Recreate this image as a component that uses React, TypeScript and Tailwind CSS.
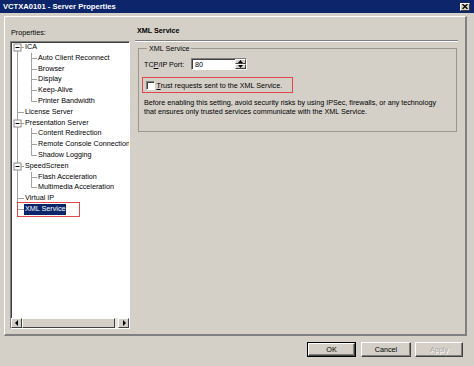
import React from "react";

type Row = {
  t: string;
  l: 0 | 1;
  box?: boolean;
  first?: boolean;
  last?: boolean;
  lastTop?: boolean;
  selected?: boolean;
};

const rows: Row[] = [
  { t: "ICA", l: 0, box: true, first: true },
  { t: "Auto Client Reconnect", l: 1 },
  { t: "Browser", l: 1 },
  { t: "Display", l: 1 },
  { t: "Keep-Alive", l: 1 },
  { t: "Printer Bandwidth", l: 1, last: true },
  { t: "License Server", l: 0 },
  { t: "Presentation Server", l: 0, box: true },
  { t: "Content Redirection", l: 1 },
  { t: "Remote Console Connection", l: 1 },
  { t: "Shadow Logging", l: 1, last: true },
  { t: "SpeedScreen", l: 0, box: true },
  { t: "Flash Acceleration", l: 1 },
  { t: "Multimedia Acceleration", l: 1, last: true },
  { t: "Virtual IP", l: 0 },
  { t: "XML Service", l: 0, lastTop: true, selected: true },
];

const H = 10.8;
const C = 5.5;
const LINE = "#a0a0a0";

function Gutter({ r }: { r: Row }) {
  const w = r.l === 0 ? 12 : 25;
  return (
    <svg width={w} height={H} className="shrink-0 block">
      {r.l === 0 ? (
        <>
          <line x1={5.5} x2={5.5} y1={r.first ? C : 0} y2={r.lastTop ? C : H} stroke={LINE} strokeWidth={1} />
          <line x1={5.5} x2={12} y1={C} y2={C} stroke={LINE} strokeWidth={1} />
          {r.box && (
            <>
              <rect x={2} y={2} width={7} height={7} fill="#fff" stroke="#8a8a8a" strokeWidth={1} />
              <line x1={3.5} x2={7.5} y1={C} y2={C} stroke="#000" strokeWidth={1} />
            </>
          )}
        </>
      ) : (
        <>
          <line x1={5.5} x2={5.5} y1={0} y2={H} stroke={LINE} strokeWidth={1} />
          <line x1={19.5} x2={19.5} y1={0} y2={r.last ? C : H} stroke={LINE} strokeWidth={1} />
          <line x1={19.5} x2={25} y1={C} y2={C} stroke={LINE} strokeWidth={1} />
        </>
      )}
    </svg>
  );
}

function Tree() {
  return (
    <div className="mt-[4px] w-[120px] h-[288px] bg-white border-t border-l border-t-[#808080] border-l-[#808080] border-b border-r border-b-white border-r-white shadow-[inset_1px_1px_0_#404040] flex flex-col overflow-hidden">
      <div className="flex-1 pl-[1px] overflow-hidden">
        {rows.map((r) => (
          <div key={r.t} className="relative flex items-center h-[10.8px] whitespace-nowrap">
            <Gutter r={r} />
            {r.selected ? (
              <>
                <span className="bg-[#0a246a] text-white px-[1px] leading-[10.8px]">{r.t}</span>
                <span className="absolute left-[5px] top-[-2px] w-[63px] h-[15px] border-[1.5px] border-[#e0464b]" />
              </>
            ) : (
              <span className="pl-[1px] leading-[10.8px] text-black">{r.t}</span>
            )}
          </div>
        ))}
      </div>
      <div className="h-[10px] flex bg-[#e9e7e3] shrink-0">
        <ScrollBtn dir="left" />
        <div className="w-[93px] h-[10px] bg-[#d4d0c8] border-t border-l border-white border-b border-r border-b-[#404040] border-r-[#404040]" />
        <div className="flex-1" />
        <ScrollBtn dir="right" />
      </div>
    </div>
  );
}

function ScrollBtn({ dir }: { dir: "left" | "right" }) {
  return (
    <div className="w-[11px] h-[10px] bg-[#d4d0c8] border-t border-l border-white border-b border-r border-b-[#404040] border-r-[#404040] flex items-center justify-center">
      <svg width="4" height="6" viewBox="0 0 4 6">
        {dir === "left" ? <path d="M3 0 L0 3 L3 6 Z" fill="#000" /> : <path d="M1 0 L4 3 L1 6 Z" fill="#000" />}
      </svg>
    </div>
  );
}

function Button({ children, def, disabled }: { children: React.ReactNode; def?: boolean; disabled?: boolean }) {
  return (
    <div className={"h-[15px] flex items-center justify-center bg-[#d4d0c8] " + (def ? "border border-black " : "")}>
      <div className="w-full h-full flex items-center justify-center border-t border-l border-white border-b border-r border-b-[#404040] border-r-[#404040] shadow-[inset_-1px_-1px_0_#808080]">
        <span
          className={
            "text-[7.2px] leading-[9px] " +
            (disabled ? "text-[#a8a49c] [text-shadow:1px_1px_0_#ffffff]" : "text-black")
          }
        >
          {children}
        </span>
      </div>
    </div>
  );
}

export default function App() {
  return (
    <div className="w-[474px] h-[366px] bg-[#d4d0c8] flex flex-col overflow-hidden font-['Liberation_Sans',Arial,sans-serif] text-black text-[7.2px] leading-[9px]">
      {/* Title bar */}
      <div className="h-[13px] shrink-0 bg-[#0c256b] flex items-center justify-between pl-[3px] pr-[4px]">
        <span className="text-white font-bold text-[7.6px] leading-[13px]">VCTXA0101 - Server Properties</span>
        <div className="w-[10px] h-[8px] bg-[#d4d0c8] border-t border-l border-white border-b border-r border-b-[#404040] border-r-[#404040] flex items-center justify-center">
          <svg width="6" height="5" viewBox="0 0 6 5">
            <path d="M0.5 0 L5.5 5 M5.5 0 L0.5 5" stroke="#000" strokeWidth="1.3" />
          </svg>
        </div>
      </div>

      {/* Panel */}
      <div className="mt-[3px] ml-[4px] w-[463px] h-[320px] shrink-0 flex border-t border-l border-white border-r-2 border-b-2 border-r-[#808080] border-b-[#808080]">
        {/* Left column */}
        <div className="w-[126px] shrink-0 pl-[5px] pt-[11px] flex flex-col">
          <div className="pl-[1px] h-[9px]">Properties:</div>
          <Tree />
        </div>

        {/* Right column */}
        <div className="flex-1 pt-[8.5px] flex flex-col">
          <div className="pl-[6px] font-bold h-[9px]">XML Service</div>
          <div className="mt-[5.5px] ml-[4px] mr-[7px] h-[2px] border-t border-t-[#808080] border-b border-b-white" />
          <fieldset className="mt-[1.5px] ml-[7px] mr-[8px] border border-[#9a978f] px-[4px] pb-[15px]">
            <legend className="ml-[4px] px-[2px] leading-[9px]">XML Service</legend>
            <div className="mt-[5.5px] flex items-center h-[12px]">
              <span className="w-[48px] pl-[1px]">
                TC<span className="underline">P</span>/IP Port:
              </span>
              <div className="w-[56px] h-[12px] flex bg-white border-t border-l border-t-[#808080] border-l-[#808080] border-b border-r border-b-white border-r-white shadow-[inset_1px_1px_0_#404040]">
                <span className="flex-1 pl-[3px] pt-[1px] leading-[10px]">80</span>
                <div className="w-[11px] flex flex-col">
                  <div className="flex-1 bg-[#d4d0c8] border-t border-l border-white border-b border-r border-b-[#404040] border-r-[#404040] flex items-center justify-center">
                    <svg width="5" height="3" viewBox="0 0 5 3"><path d="M0 3 L2.5 0 L5 3 Z" fill="#000" /></svg>
                  </div>
                  <div className="flex-1 bg-[#d4d0c8] border-t border-l border-white border-b border-r border-b-[#404040] border-r-[#404040] flex items-center justify-center">
                    <svg width="5" height="3" viewBox="0 0 5 3"><path d="M0 0 L2.5 3 L5 0 Z" fill="#000" /></svg>
                  </div>
                </div>
              </div>
            </div>
            <div className="mt-[7px] -ml-[1px] inline-flex items-center h-[16px] w-[151px] border-[1.5px] border-[#e0464b] pl-[2.5px]">
              <span className="w-[9px] h-[9px] bg-white border-t border-l border-t-[#808080] border-l-[#808080] border-b border-r border-b-white border-r-white shadow-[inset_1px_1px_0_#404040] shrink-0" />
              <span className="ml-[2px] whitespace-nowrap">
                <span className="underline">T</span>rust requests sent to the XML Service.
              </span>
            </div>
            <p className="mt-[4.5px] pl-[1px] leading-[9px] whitespace-nowrap">
              Before enabling this setting, avoid security risks by using IPSec, firewalls, or any technology
              <br />
              that ensures only trusted services communicate with the XML Service.
            </p>
          </fieldset>
        </div>
      </div>

      {/* Buttons */}
      <div className="mt-[6px] flex justify-end pr-[11px]">
        <div className="w-[49px]"><Button def>OK</Button></div>
        <div className="w-[50px] ml-[5px]"><Button>Cancel</Button></div>
        <div className="w-[48px] ml-[4px]"><Button disabled>Apply</Button></div>
      </div>
    </div>
  );
}
